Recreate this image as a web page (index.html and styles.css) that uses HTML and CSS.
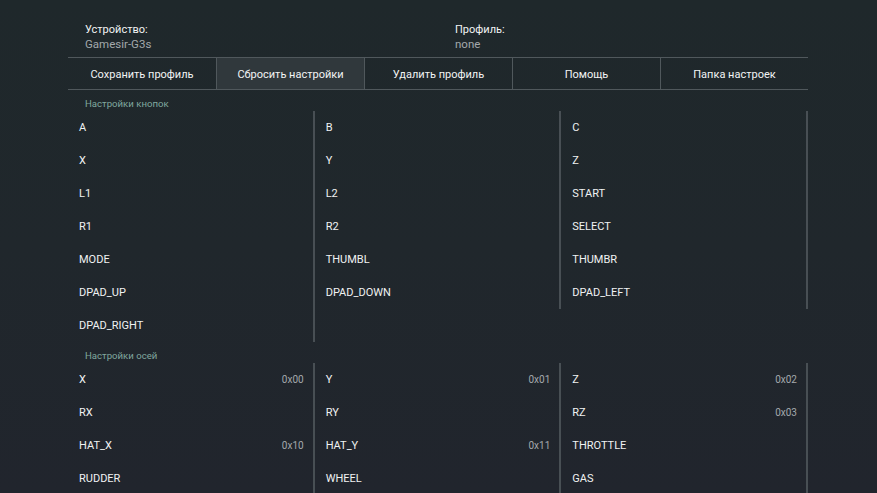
FILE: index.html
```html
<!DOCTYPE html>
<html lang="ru">
<head>
<meta charset="utf-8">
<title>Gamepad settings</title>
<link rel="stylesheet" href="styles.css">
</head>
<body>
<div class="page">
  <div class="header">
    <div class="info">
      <div class="info-title">Устройство:</div>
      <div class="info-value">Gamesir-G3s</div>
    </div>
    <div class="info">
      <div class="info-title">Профиль:</div>
      <div class="info-value">none</div>
    </div>
  </div>
  <div class="actions">
    <div class="btn">Сохранить профиль</div>
    <div class="btn active">Сбросить настройки</div>
    <div class="btn">Удалить профиль</div>
    <div class="btn">Помощь</div>
    <div class="btn">Папка настроек</div>
  </div>

  <div class="section-title">Настройки кнопок</div>
  <div class="grid">
    <div class="cell">A</div>
    <div class="cell">B</div>
    <div class="cell">C</div>
    <div class="cell">X</div>
    <div class="cell">Y</div>
    <div class="cell">Z</div>
    <div class="cell">L1</div>
    <div class="cell">L2</div>
    <div class="cell">START</div>
    <div class="cell">R1</div>
    <div class="cell">R2</div>
    <div class="cell">SELECT</div>
    <div class="cell">MODE</div>
    <div class="cell">THUMBL</div>
    <div class="cell">THUMBR</div>
    <div class="cell">DPAD_UP</div>
    <div class="cell">DPAD_DOWN</div>
    <div class="cell">DPAD_LEFT</div>
    <div class="cell">DPAD_RIGHT</div>
  </div>

  <div class="section-title">Настройки осей</div>
  <div class="grid">
    <div class="cell"><span>X</span><span class="code">0x00</span></div>
    <div class="cell"><span>Y</span><span class="code">0x01</span></div>
    <div class="cell"><span>Z</span><span class="code">0x02</span></div>
    <div class="cell"><span>RX</span></div>
    <div class="cell"><span>RY</span></div>
    <div class="cell"><span>RZ</span><span class="code">0x03</span></div>
    <div class="cell"><span>HAT_X</span><span class="code">0x10</span></div>
    <div class="cell"><span>HAT_Y</span><span class="code">0x11</span></div>
    <div class="cell"><span>THROTTLE</span></div>
    <div class="cell"><span>RUDDER</span></div>
    <div class="cell"><span>WHEEL</span></div>
    <div class="cell"><span>GAS</span></div>
  </div>
</div>
</body>
</html>
```

FILE: styles.css
```css
html, body {
  margin: 0;
  padding: 0;
  height: 100%;
  overflow: hidden;
}

body {
  background: linear-gradient(180deg, #1f282b 0%, #20272c 50%, #21252d 100%);
  color: #eef0f0;
  font-family: Roboto, "Noto Sans", sans-serif;
}

.page {
  width: 740px;
  margin-left: 68px;
}

.header {
  display: grid;
  grid-template-columns: 1fr 1fr;
  padding-top: 22px;
  height: 35px;
}

.info {
  padding-left: 17px;
}

.info-title {
  font-size: 11px;
  line-height: 16px;
  color: #f2f4f4;
}

.info-value {
  font-size: 11.5px;
  line-height: 13px;
  color: #a3a9ab;
}

.actions {
  display: grid;
  grid-template-columns: repeat(5, 1fr);
  border-top: 1px solid #50585c;
  border-bottom: 1px solid #50585c;
  height: 31px;
}

.btn {
  display: flex;
  align-items: center;
  justify-content: center;
  padding-top: 2px;
  font-size: 11px;
  color: #f2f4f4;
  border-left: 1px solid #50585c;
}

.btn:first-child {
  border-left: none;
}

.btn.active {
  background: #30383c;
}

.section-title {
  padding: 7px 0 0 17px;
  height: 14px;
  line-height: 14px;
  font-size: 9.6px;
  color: #80a89f;
}

.grid {
  display: grid;
  grid-template-columns: repeat(3, 1fr);
}

.cell {
  height: 33px;
  display: flex;
  align-items: center;
  justify-content: space-between;
  padding: 0 9px 0 11px;
  border-right: 2px solid #484f54;
  font-size: 11px;
  color: #f0f2f2;
}

.code {
  font-size: 10px;
  color: #a4a9ac;
}
```
